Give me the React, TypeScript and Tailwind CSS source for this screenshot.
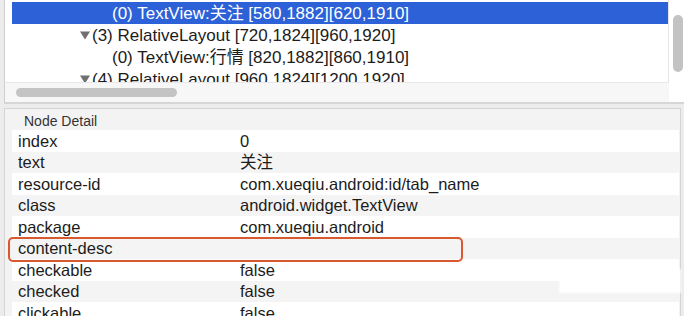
import React from 'react';

type TreeRow = { depth: number; arrow: boolean; label: string; selected?: boolean };

const treeRows: TreeRow[] = [
  { depth: 1, arrow: true, label: '(2) RelativeLayout [480,1824][720,1920]' },
  { depth: 2, arrow: false, label: '(0) TextView:关注 [580,1882][620,1910]', selected: true },
  { depth: 1, arrow: true, label: '(3) RelativeLayout [720,1824][960,1920]' },
  { depth: 2, arrow: false, label: '(0) TextView:行情 [820,1882][860,1910]' },
  { depth: 1, arrow: true, label: '(4) RelativeLayout [960,1824][1200,1920]' },
];

const details: [string, string][] = [
  ['index', '0'],
  ['text', '关注'],
  ['resource-id', 'com.xueqiu.android:id/tab_name'],
  ['class', 'android.widget.TextView'],
  ['package', 'com.xueqiu.android'],
  ['content-desc', ''],
  ['checkable', 'false'],
  ['checked', 'false'],
  ['clickable', 'false'],
];

function Arrow() {
  return (
    <svg width="10" height="9" viewBox="0 0 10 9" className="mr-[2px] shrink-0">
      <path d="M0 0.5 H10 L5 8.5 Z" fill="#707070" />
    </svg>
  );
}

function Tree() {
  return (
    <div className="flex h-[104px] border-b-2 border-[#d6d6d6] border-l border-l-[#cfcfcf] ml-[4px] bg-white">
      <div className="flex flex-col w-[664px]">
        {/* tree list */}
        <div className="h-[82px] overflow-hidden border-r border-[#e6e6e6]">
          <div className="flex flex-col mt-[-20px]">
            {treeRows.map((r, i) => (
              <div
                key={i}
                className={
                  'h-[22px] flex items-center text-[17px] leading-none whitespace-nowrap ' +
                  (r.selected ? 'bg-[#2d61d7] text-white ml-[7px]' : 'text-[#1c1c1c]')
                }
              >
                <span
                  className={
                    'flex items-center ' +
                    (r.selected ? 'pl-[100px]' : r.depth === 1 ? 'pl-[75px]' : 'pl-[107px]')
                  }
                >
                  {r.arrow && <Arrow />}
                  <span>{r.label}</span>
                </span>
              </div>
            ))}
          </div>
        </div>
        {/* horizontal scrollbar */}
        <div className="h-[20px] bg-[#f7f7f7] border-t border-[#e8e8e8] flex items-center pl-[11px]">
          <div className="w-[161px] h-[9px] rounded-full bg-[#c4c4c4]"></div>
        </div>
      </div>
      {/* vertical scrollbar */}
      <div className="flex-1 flex flex-col items-center pt-[15px] pl-[3px]">
        <div className="w-[10px] h-[57px] rounded-full bg-[#c3c3c3]"></div>
      </div>
    </div>
  );
}

function NodeDetail() {
  return (
    <div className="relative mt-[4px] ml-[4px] mr-[3px] border-l border-t border-r border-[#d4d4d4] bg-[#f3f3f3]">
      <div className="h-[21px] pl-[19px] pt-[5px] text-[14px] leading-none text-[#333]">Node Detail</div>
      <div className="flex flex-col ml-[7px] mr-[1px]">
        {details.map(([k, v], i) => (
          <div
            key={k}
            className={
              'h-[21.5px] flex items-center text-[16.5px] leading-none text-[#1c1c1c] ' +
              (i % 2 === 0 ? 'bg-white' : 'bg-[#f4f4f4]')
            }
          >
            <span className="w-[228px] pl-[6px]">{k}</span>
            <span>{v}</span>
          </div>
        ))}
      </div>
      {/* highlight around content-desc */}
      <div className="absolute left-[3px] top-[128px] w-[455px] h-[25px] border-2 border-[#d9592f] rounded-[5px]"></div>
      {/* white patch */}
      <div className="absolute left-[554px] top-[160px] w-[122px] h-[24px] bg-white blur-[1px]"></div>
    </div>
  );
}

export default function App() {
  return (
    <div
      className="w-[684px] h-[316px] overflow-hidden bg-[#ececec]"
      style={{ fontFamily: '"Liberation Sans", "Noto Sans CJK SC", sans-serif' }}
    >
      <Tree />
      <NodeDetail />
    </div>
  );
}
